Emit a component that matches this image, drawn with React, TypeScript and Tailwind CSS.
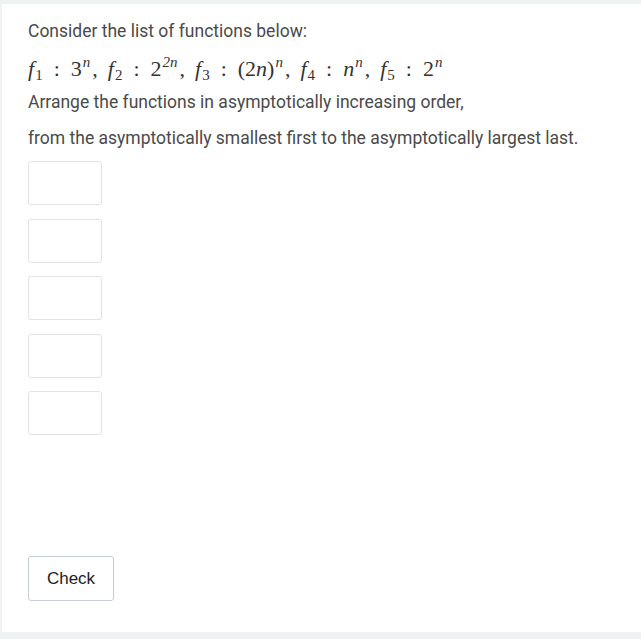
const serif = "font-['Liberation_Serif','DejaVu_Serif',serif]";

function Sub({ children }: { children: React.ReactNode }) {
  return <sub className="relative top-[4px] ml-[1px] align-baseline text-[15px] not-italic">{children}</sub>;
}

function Sup({ children }: { children: React.ReactNode }) {
  return <sup className="relative -top-[9px] ml-[1px] align-baseline text-[15px] italic">{children}</sup>;
}

function Colon() {
  return <span className="mx-[11px] not-italic">:</span>;
}

function Comma() {
  return <span className="ml-[2px] mr-[10px] not-italic">,</span>;
}

function MathLine() {
  return (
    <div className={`${serif} mt-[14px] flex h-6 items-center text-[22px] leading-6 text-[#333]`}>
      <span className="whitespace-nowrap">
        <i>f</i><Sub>1</Sub><Colon />3<Sup>n</Sup><Comma />
        <i>f</i><Sub>2</Sub><Colon />2<Sup>2n</Sup><Comma />
        <i>f</i><Sub>3</Sub><Colon />(2<i>n</i>)<Sup>n</Sup><Comma />
        <i>f</i><Sub>4</Sub><Colon /><i>n</i><Sup>n</Sup><Comma />
        <i>f</i><Sub>5</Sub><Colon />2<Sup>n</Sup>
      </span>
    </div>
  );
}

export default function App() {
  const slots = [1, 2, 3, 4, 5];
  return (
    <div className="min-h-[639px] bg-[#eef2f2] pl-[2px] pt-[4px] pb-[7px]">
      <div className="bg-white pl-[26px] pt-[15px] pb-[31px] font-['Roboto',sans-serif] text-[17.5px] text-[#4a4a4a]">
        <p className="leading-6">Consider the list of functions below:</p>
        <MathLine />
        <p className="mt-[9px] leading-6">Arrange the functions in asymptotically increasing order,</p>
        <p className="mt-[12px] leading-6">from the asymptotically smallest first to the asymptotically largest last.</p>

        <div className="mt-[11px] flex flex-col gap-[13.5px]">
          {slots.map((s) => (
            <div key={s} className="h-[44px] w-[74px] rounded-[3px] border border-[#dfe3e6] bg-white" />
          ))}
        </div>

        <button className="mt-[121px] h-[45px] w-[86px] rounded-[3px] border border-[#c8ccd6] bg-white font-['Liberation_Sans',sans-serif] text-[17px] text-[#1d2125]">
          Check
        </button>
      </div>
    </div>
  );
}
